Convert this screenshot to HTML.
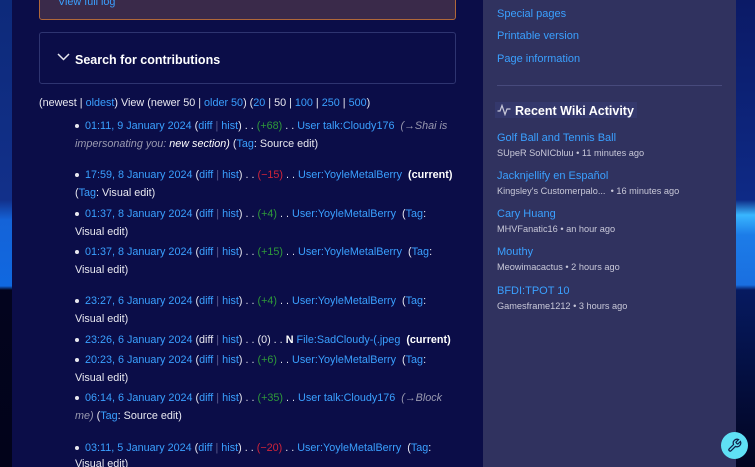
<!DOCTYPE html>
<html><head><meta charset="utf-8"><style>
*{margin:0;padding:0;box-sizing:border-box}
html,body{width:755px;height:467px;overflow:hidden}
body{background:#0b0d48;font-family:"Liberation Sans",sans-serif;font-size:10.8px;color:#e8e8f0;position:relative}
.l{position:absolute;white-space:nowrap;line-height:14px}
a{color:#3aa0ff;text-decoration:none}
.g{color:#2f9a3a}.r{color:#d0243a}
.i{font-style:italic;color:#9a9ab0}
.s{color:#5a5d90}
.b{font-weight:bold;color:#fff}
.dot{position:absolute;width:4px;height:4px;border-radius:50%;background:#e8e8f0}
.side a{font-size:11px}
.m{color:#c8c8d8;font-size:9.2px}
</style></head><body>
<div style="position:absolute;left:0;top:0;width:12px;height:467px;background:linear-gradient(#0d2a7a 0,#12308a 200px,#1463d8 220px,#1068e0 286px,#03041e 290px,#02031a 467px)"></div>
<div style="position:absolute;left:736px;top:0;width:19px;height:467px;background:linear-gradient(#0b1a66 0,#0e2a86 200px,#39b6ff 215px,#1c7ce8 235px,#1a6fe0 285px,#061a60 290px,#020420 467px)"></div>
<div style="position:absolute;left:483px;top:0;width:253px;height:467px;background:#30325f"></div>
<div style="position:absolute;left:39px;top:-10px;width:417px;height:30px;background:#3a2a4a;border:1px solid #b0683a;border-radius:3px"></div>
<div class="l" style="left:58px;top:-5px"><a>View full log</a></div>
<div style="position:absolute;left:39px;top:32px;width:417px;height:52px;border:1px solid #2e3470;border-radius:3px"></div>
<svg style="position:absolute;left:57px;top:53px" width="13" height="8"><path d="M1 1 L6.5 6.5 L12 1" stroke="#e8e8f0" stroke-width="1.5" fill="none"/></svg>
<div class="l" style="left:75px;top:53px;font-size:12.5px;font-weight:bold;color:#fff">Search for contributions</div>

<div class="l" style="left:39px;top:96px">(newest | <a>oldest</a>) View (newer 50 | <a>older 50</a>) (<a>20</a> | 50 | <a>100</a> | <a>250</a> | <a>500</a>)</div>

<div class="dot" style="left:75px;top:124px"></div>
<div class="l" style="left:85px;top:119px"><a>01:11, 9 January 2024</a> (<a>diff</a> <span class="s">|</span> <a>hist</a>) . . <span class="g">(+68)</span> . . <a>User talk:Cloudy176</a> &nbsp;<span class="i">(→Shai is</span></div>
<div class="l" style="left:75px;top:137px"><span class="i">impersonating you: <span style="color:#fff">new section)</span></span> (<a>Tag</a>: Source edit)</div>

<div class="dot" style="left:75px;top:173px"></div>
<div class="l" style="left:85px;top:168px"><a>17:59, 8 January 2024</a> (<a>diff</a> <span class="s">|</span> <a>hist</a>) . . <span class="r">(−15)</span> . . <a>User:YoyleMetalBerry</a> &nbsp;<span class="b">(current)</span></div>
<div class="l" style="left:75px;top:186px">(<a>Tag</a>: Visual edit)</div>

<div class="dot" style="left:75px;top:212px"></div>
<div class="l" style="left:85px;top:207px"><a>01:37, 8 January 2024</a> (<a>diff</a> <span class="s">|</span> <a>hist</a>) . . <span class="g">(+4)</span> . . <a>User:YoyleMetalBerry</a> &nbsp;(<a>Tag</a>:</div>
<div class="l" style="left:75px;top:225px">Visual edit)</div>

<div class="dot" style="left:75px;top:250px"></div>
<div class="l" style="left:85px;top:245px"><a>01:37, 8 January 2024</a> (<a>diff</a> <span class="s">|</span> <a>hist</a>) . . <span class="g">(+15)</span> . . <a>User:YoyleMetalBerry</a> &nbsp;(<a>Tag</a>:</div>
<div class="l" style="left:75px;top:263px">Visual edit)</div>

<div class="dot" style="left:75px;top:299px"></div>
<div class="l" style="left:85px;top:294px"><a>23:27, 6 January 2024</a> (<a>diff</a> <span class="s">|</span> <a>hist</a>) . . <span class="g">(+4)</span> . . <a>User:YoyleMetalBerry</a> &nbsp;(<a>Tag</a>:</div>
<div class="l" style="left:75px;top:312px">Visual edit)</div>

<div class="dot" style="left:75px;top:338px"></div>
<div class="l" style="left:85px;top:333px"><a>23:26, 6 January 2024</a> (diff <span class="s">|</span> <a>hist</a>) . . (0) . . <b style="color:#fff">N</b> <a>File:SadCloudy-(.jpeg</a> &nbsp;<span class="b">(current)</span></div>

<div class="dot" style="left:75px;top:358px"></div>
<div class="l" style="left:85px;top:353px"><a>20:23, 6 January 2024</a> (<a>diff</a> <span class="s">|</span> <a>hist</a>) . . <span class="g">(+6)</span> . . <a>User:YoyleMetalBerry</a> &nbsp;(<a>Tag</a>:</div>
<div class="l" style="left:75px;top:371px">Visual edit)</div>

<div class="dot" style="left:75px;top:396px"></div>
<div class="l" style="left:85px;top:391px"><a>06:14, 6 January 2024</a> (<a>diff</a> <span class="s">|</span> <a>hist</a>) . . <span class="g">(+35)</span> . . <a>User talk:Cloudy176</a> &nbsp;<span class="i">(→Block</span></div>
<div class="l" style="left:75px;top:409px"><span class="i">me)</span> (<a>Tag</a>: Source edit)</div>

<div class="dot" style="left:75px;top:446px"></div>
<div class="l" style="left:85px;top:441px"><a>03:11, 5 January 2024</a> (<a>diff</a> <span class="s">|</span> <a>hist</a>) . . <span class="r">(−20)</span> . . <a>User:YoyleMetalBerry</a> &nbsp;(<a>Tag</a>:</div>
<div class="l" style="left:75px;top:457px">Visual edit)</div>

<div class="side">
<div class="l" style="left:497px;top:7px"><a>Special pages</a></div>
<div class="l" style="left:497px;top:29px"><a>Printable version</a></div>
<div class="l" style="left:497px;top:52px"><a>Page information</a></div>
<div style="position:absolute;left:497px;top:85px;width:225px;height:1px;background:#474a7c"></div>
<div style="position:absolute;left:495px;top:102px;width:142px;height:16px;background:#34386c"></div>
<svg style="position:absolute;left:497px;top:104px" width="14" height="12"><path d="M0.5 7 L3 7 L5 1.5 L8 10.5 L10 5 L13.5 5" stroke="#c8c8d8" stroke-width="1.2" fill="none"/></svg>
<div class="l" style="left:515px;top:104px;font-size:12.5px;font-weight:bold;color:#fff">Recent Wiki Activity</div>
<div class="l" style="left:497px;top:131px"><a>Golf Ball and Tennis Ball</a></div>
<div class="l m" style="left:497px;top:146px">SUpeR SoNICbluu • 11 minutes ago</div>
<div class="l" style="left:497px;top:169px"><a>Jacknjellify en Español</a></div>
<div class="l m" style="left:497px;top:184px">Kingsley's Customerpalo... &nbsp;• 16 minutes ago</div>
<div class="l" style="left:497px;top:207px"><a>Cary Huang</a></div>
<div class="l m" style="left:497px;top:222px">MHVFanatic16 • an hour ago</div>
<div class="l" style="left:497px;top:245px"><a>Mouthy</a></div>
<div class="l m" style="left:497px;top:260px">Meowimacactus • 2 hours ago</div>
<div class="l" style="left:497px;top:284px"><a>BFDI:TPOT 10</a></div>
<div class="l m" style="left:497px;top:299px">Gamesframe1212 • 3 hours ago</div>
</div>
<div style="position:absolute;left:721px;top:432px;width:27px;height:27px;border-radius:50%;background:#5fe0f5"></div>
<svg style="position:absolute;left:727px;top:438px" width="15" height="15" viewBox="0 0 24 24"><path d="M14.7 6.3a1 1 0 0 0 0 1.4l1.6 1.6a1 1 0 0 0 1.4 0l3.770-3.770a6 6 0 0 1-7.940 7.940l-6.910 6.910a2.120 2.120 0 0 1-3-3l6.910-6.910a6 6 0 0 1 7.940-7.940l-3.760 3.760z" stroke="#10204a" stroke-width="2" fill="none"/></svg>
</body></html>
